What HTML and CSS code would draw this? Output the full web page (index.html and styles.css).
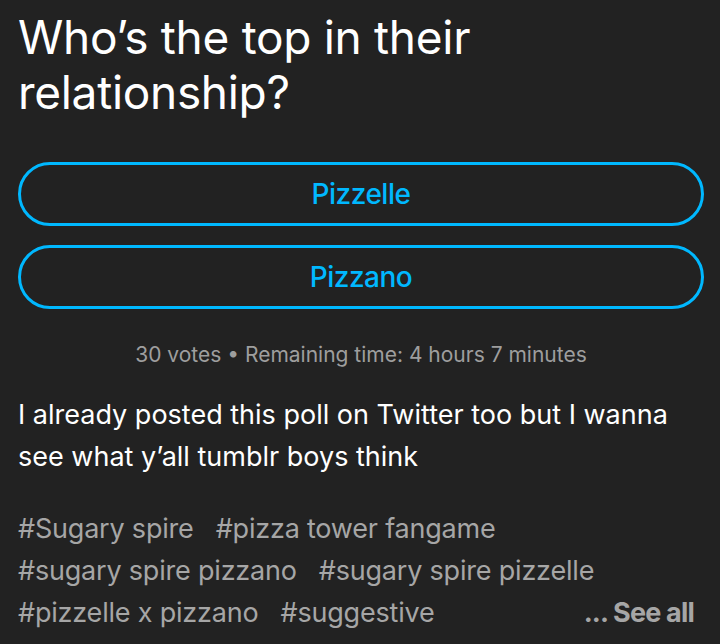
FILE: index.html
```html
<!DOCTYPE html>
<html>
<head>
<meta charset="utf-8">
<link rel="stylesheet" href="styles.css">
</head>
<body>
<div class="post">
  <h1 class="title">Who’s the top in their relationship?</h1>
  <div class="options">
    <button class="option">Pizzelle</button>
    <button class="option">Pizzano</button>
  </div>
  <div class="meta">30 votes • Remaining time: 4 hours 7 minutes</div>
  <p class="body">I already posted this poll on Twitter too but I wanna see what y’all tumblr boys think</p>
  <div class="tags">
    <div class="tag-row"><span class="tag">#Sugary spire</span><span class="tag">#pizza tower fangame</span></div>
    <div class="tag-row"><span class="tag">#sugary spire pizzano</span><span class="tag">#sugary spire pizzelle</span></div>
    <div class="tag-row"><span class="tag">#pizzelle x pizzano</span><span class="tag">#suggestive</span><span class="see-all">... See all</span></div>
  </div>
</div>
</body>
</html>
```
FILE: styles.css
```css
html, body {
  margin: 0;
  padding: 0;
  background: #222222;
}
.post {
  width: 720px;
  height: 644px;
  overflow: hidden;
  padding: 0 16px 0 18px;
  box-sizing: border-box;
  font-family: Inter, "Noto Sans", sans-serif;
}
.title {
  margin: 10px 0 0 0;
  font-weight: 400;
  font-size: 46px;
  line-height: 55px;
  color: #ffffff;
  letter-spacing: -0.3px;
}
.options {
  margin-top: 42px;
  display: flex;
  flex-direction: column;
  gap: 19px;
}
.option {
  height: 64px;
  border: 3px solid #00b8ff;
  border-radius: 32px;
  background: transparent;
  color: #00b8ff;
  font-family: Inter, sans-serif;
  font-weight: 500;
  font-size: 28px;
  letter-spacing: -0.5px;
  cursor: pointer;
}
.meta {
  margin-top: 34px;
  text-align: center;
  color: #9e9e9e;
  font-size: 21px;
  line-height: 24px;
}
.body {
  margin: 27px 0 0 0;
  color: #ffffff;
  font-size: 27px;
  line-height: 42px;
}
.tags {
  margin-top: 30px;
  padding-right: 10px;
  color: #a6a6a6;
  font-size: 27px;
  letter-spacing: -0.2px;
}
.tag-row {
  display: flex;
  gap: 22px;
  line-height: 42px;
}
.see-all {
  margin-left: auto;
  font-weight: 700;
  letter-spacing: -0.8px;
  color: #a6a6a6;
}
```
